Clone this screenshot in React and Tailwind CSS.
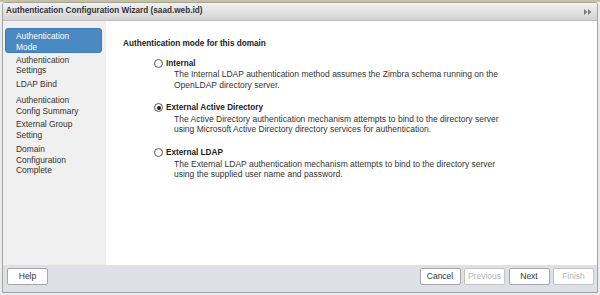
import React from "react";

function Radio({ checked }) {
  return (
    <span className="relative inline-flex h-[9px] w-[9px] shrink-0 items-center justify-center rounded-full border border-[#5a5a5a] bg-white">
      {checked && <span className="h-[4px] w-[4px] rounded-full bg-[#222]" />}
    </span>
  );
}

function Option({ label, lines, checked, className = "" }) {
  return (
    <div className={className}>
      <div className="flex items-center h-[11px]">
        <Radio checked={checked} />
        <span className="ml-[3px] text-[8.2px] font-bold leading-[11px] text-[#222]">{label}</span>
      </div>
      <div className="ml-[20px] mt-[0.5px] text-[8.5px] leading-[10.4px] text-[#333]">
        {lines.map((l, i) => (
          <div key={i}>{l}</div>
        ))}
      </div>
    </div>
  );
}

function Btn({ children, disabled, w = "w-[41px]" }) {
  return (
    <div
      className={`${w} h-[17px] flex items-center justify-center rounded-[2px] border bg-white text-[8.5px] ${
        disabled ? "border-[#c4c4c4] text-[#b4b4b4]" : "border-[#a6a6a6] text-[#333]"
      }`}
    >
      {children}
    </div>
  );
}

export default function App() {
  const font = { fontFamily: '"Liberation Sans", Arial, sans-serif' };
  return (
    <div className="w-[600px] h-[295px] overflow-hidden bg-[#ebebeb]" style={font}>
      <div className="h-[2px] bg-[#c8c19b]" />
      <div className="ml-[2px] w-[596px] h-[291px] border border-[#a3a3a3] rounded-t-[3px] flex flex-col bg-white">
        <div className="h-[18px] shrink-0 flex items-center justify-between bg-gradient-to-b from-[#f2f2f2] to-[#d3d3d3] border-b border-[#bdbdbd] pl-[3px] pr-[5px] rounded-t-[2px]">
          <span className="text-[8.2px] font-bold text-[#333]">Authentication Configuration Wizard (saad.web.id)</span>
          <svg width="8" height="6" viewBox="0 0 8 6">
            <path d="M0 0 L3.5 3 L0 6 Z" fill="#7a7a7a" />
            <path d="M4 0 L7.5 3 L4 6 Z" fill="#7a7a7a" />
          </svg>
        </div>
        <div className="flex flex-1 min-h-0">
          <div className="w-[103px] shrink-0 bg-[#f0f0f0] pt-[7px] pl-[2px] pr-[4px] text-[8.4px] leading-[10.5px] text-[#333]">
            <div className="h-[25px] rounded-[3px] bg-[#4b89c3] border border-[#3f7cb6] pl-[10px] pt-[2px] text-white">
              <div>Authentication</div>
              <div>Mode</div>
            </div>
            <div className="pl-[11px]">
              <div className="mt-[1.8px]">
                <div>Authentication</div>
                <div>Settings</div>
              </div>
              <div className="mt-[3.3px]">LDAP Bind</div>
              <div className="mt-[5.9px]">
                <div>Authentication</div>
                <div>Config Summary</div>
              </div>
              <div className="mt-[3px]">
                <div>External Group</div>
                <div>Setting</div>
              </div>
              <div className="mt-[3.6px]">
                <div>Domain</div>
                <div>Configuration</div>
                <div>Complete</div>
              </div>
            </div>
          </div>
          <div className="flex-1 bg-white pl-[17px] pt-[17px]">
            <div className="text-[8.2px] font-bold leading-[11px] text-[#222]">Authentication mode for this domain</div>
            <div className="ml-[31px] mt-[8.6px]">
              <Option
                label="Internal"
                lines={[
                  "The Internal LDAP authentication method assumes the Zimbra schema running on the",
                  "OpenLDAP directory server.",
                ]}
              />
              <Option
                className="mt-[12.4px]"
                checked
                label="External Active Directory"
                lines={[
                  "The Active Directory authentication mechanism attempts to bind to the directory server",
                  "using Microsoft Active Directory directory services for authentication.",
                ]}
              />
              <Option
                className="mt-[12.6px]"
                label="External LDAP"
                lines={[
                  "The External LDAP authentication mechanism attempts to bind to the directory server",
                  "using the supplied user name and password.",
                ]}
              />
            </div>
          </div>
        </div>
        <div className="h-[27px] shrink-0 bg-[#dde0e6] flex items-start justify-between pt-[3px] pl-[4px] pr-[3px]">
          <Btn>Help</Btn>
          <div className="flex gap-[3.5px]">
            <Btn>Cancel</Btn>
            <Btn disabled>Previous</Btn>
            <Btn>Next</Btn>
            <Btn disabled>Finish</Btn>
          </div>
        </div>
      </div>
    </div>
  );
}
